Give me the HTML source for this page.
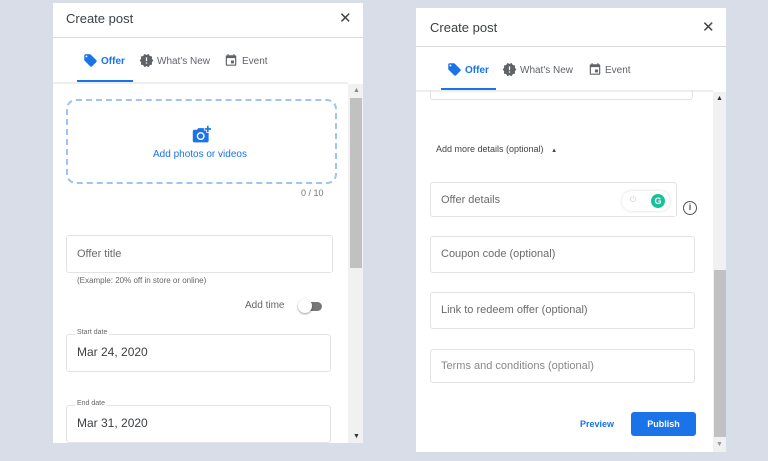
<!DOCTYPE html>
<html><head><style>
*{box-sizing:border-box;margin:0;padding:0}
body{width:768px;height:461px;background:#d9dde7;font-family:"Liberation Sans",sans-serif;position:relative;overflow:hidden}
.p{position:absolute;background:#fff}
.a{position:absolute}
.t{color:#3c4043;font-size:13px}
.tab{position:absolute;font-size:10px;color:#5f6368}
.box{position:absolute;border:1px solid #e3e3e3;border-radius:3px;background:#fff}
.ph{position:absolute;font-size:11px;color:#6b6b6b}
.x{position:absolute;font-size:15px;color:#444}
</style></head><body>
<!-- LEFT -->
<div class="p" style="left:53px;top:3px;width:310px;height:440px"></div>
<div class="a t" style="left:66px;top:11px">Create post</div>
<div class="x" style="left:339px;top:9px">✕</div>
<div class="a" style="left:53px;top:37px;width:310px;height:1px;background:#dadce0"></div>
<svg class="a" style="left:83px;top:53px" width="15" height="15" viewBox="0 0 24 24"><path fill="#1a73e8" d="M21.4 11.6l-9-9C12 2.2 11.5 2 11 2H4c-1.1 0-2 .9-2 2v7c0 .6.2 1.1.6 1.4l9 9c.4.4.9.6 1.4.6s1-.2 1.4-.6l7-7c.4-.4.6-.9.6-1.4s-.2-1-.6-1.4zM5.5 7C4.7 7 4 6.3 4 5.5S4.7 4 5.5 4 7 4.7 7 5.5 6.3 7 5.5 7z"/></svg>
<div class="tab" style="left:101px;top:56px;color:#1a73e8;font-weight:bold">Offer</div>
<svg class="a" style="left:139px;top:53px" width="15" height="15" viewBox="0 0 24 24"><path fill="#5f6368" d="M23 12l-2.4-2.8.3-3.7-3.6-.8-1.9-3.2L12 3 8.6 1.5 6.7 4.7l-3.6.8.3 3.7L1 12l2.4 2.8-.3 3.7 3.6.8 1.9 3.2L12 21l3.4 1.5 1.9-3.2 3.6-.8-.3-3.7zM13 17h-2v-2h2zm0-4h-2V7h2z"/></svg>
<div class="tab" style="left:157px;top:56px">What's New</div>
<svg class="a" style="left:224px;top:53px" width="14" height="15" viewBox="0 0 24 24"><path fill="#5f6368" d="M17 12h-5v5h5zM16 1v2H8V1H6v2H5c-1.1 0-2 .9-2 2v14c0 1.1.9 2 2 2h14c1.1 0 2-.9 2-2V5c0-1.1-.9-2-2-2h-1V1zm3 18H5V8h14z"/></svg>
<div class="tab" style="left:242px;top:56px">Event</div>
<div class="a" style="left:77px;top:80px;width:56px;height:2px;background:#1a73e8"></div>
<div class="a" style="left:53px;top:82px;width:295px;height:2px;background:#eee"></div>
<div class="a" style="left:66px;top:99px;width:271px;height:85px;border:2px dashed #9ec3f5;border-radius:10px"></div>
<svg class="a" style="left:192px;top:125px" width="19" height="19" viewBox="0 0 24 24"><path fill="#1a73e8" d="M3 4V1h2v3h3v2H5v3H3V6H0V4zm3 6V7h3V4h7l1.8 2H21c1.1 0 2 .9 2 2v12c0 1.1-.9 2-2 2H5c-1.1 0-2-.9-2-2V10zm7 9c2.8 0 5-2.2 5-5s-2.2-5-5-5-5 2.2-5 5 2.2 5 5 5zm-3.2-5c0 1.8 1.4 3.2 3.2 3.2s3.2-1.4 3.2-3.2-1.4-3.2-3.2-3.2-3.2 1.4-3.2 3.2z" transform="scale(-1,1) translate(-24,0)"/></svg>
<div class="a" style="left:153px;top:149px;font-size:10px;color:#1a73e8">Add photos or videos</div>
<div class="a" style="left:301px;top:188px;font-size:9px;color:#777">0 / 10</div>
<div class="box" style="left:66px;top:235px;width:267px;height:38px"></div>
<div class="ph" style="left:77px;top:248px">Offer title</div>
<div class="a" style="left:77px;top:276px;font-size:8px;color:#666">(Example: 20% off in store or online)</div>
<div class="a" style="left:245px;top:300px;font-size:10px;color:#666">Add time</div>
<div class="a" style="left:302px;top:302px;width:20px;height:9px;border-radius:5px;background:#777"></div>
<div class="a" style="left:298px;top:299px;width:14px;height:14px;border-radius:50%;background:#fff;box-shadow:0 1px 2px rgba(0,0,0,.4)"></div>
<div class="box" style="left:66px;top:334px;width:265px;height:38px"></div>
<div class="a" style="left:75px;top:329px;font-size:7px;color:#666;background:#fff;padding:0 2px">Start date</div>
<div class="a t" style="left:77px;top:345px;font-size:12px">Mar 24, 2020</div>
<div class="box" style="left:66px;top:405px;width:265px;height:38px"></div>
<div class="a" style="left:75px;top:400px;font-size:7px;color:#666;background:#fff;padding:0 2px">End date</div>
<div class="a t" style="left:77px;top:416px;font-size:12px">Mar 31, 2020</div>
<div class="a" style="left:348px;top:84px;width:15px;height:359px;background:#f1f1f1"></div>
<div class="a" style="left:350px;top:98px;width:12px;height:170px;background:#c1c1c1"></div>
<div class="a" style="left:353px;top:87px;font-size:7px;color:#888">▲</div>
<div class="a" style="left:353px;top:433px;font-size:7px;color:#333">▼</div>
<!-- RIGHT -->
<div class="p" style="left:416px;top:8px;width:310px;height:444px"></div>
<div class="a t" style="left:430px;top:20px">Create post</div>
<div class="x" style="left:702px;top:18px">✕</div>
<div class="a" style="left:416px;top:46px;width:310px;height:1px;background:#dadce0"></div>
<svg class="a" style="left:447px;top:62px" width="15" height="15" viewBox="0 0 24 24"><path fill="#1a73e8" d="M21.4 11.6l-9-9C12 2.2 11.5 2 11 2H4c-1.1 0-2 .9-2 2v7c0 .6.2 1.1.6 1.4l9 9c.4.4.9.6 1.4.6s1-.2 1.4-.6l7-7c.4-.4.6-.9.6-1.4s-.2-1-.6-1.4zM5.5 7C4.7 7 4 6.3 4 5.5S4.7 4 5.5 4 7 4.7 7 5.5 6.3 7 5.5 7z"/></svg>
<div class="tab" style="left:465px;top:65px;color:#1a73e8;font-weight:bold">Offer</div>
<svg class="a" style="left:502px;top:62px" width="15" height="15" viewBox="0 0 24 24"><path fill="#5f6368" d="M23 12l-2.4-2.8.3-3.7-3.6-.8-1.9-3.2L12 3 8.6 1.5 6.7 4.7l-3.6.8.3 3.7L1 12l2.4 2.8-.3 3.7 3.6.8 1.9 3.2L12 21l3.4 1.5 1.9-3.2 3.6-.8-.3-3.7zM13 17h-2v-2h2zm0-4h-2V7h2z"/></svg>
<div class="tab" style="left:520px;top:65px">What's New</div>
<svg class="a" style="left:588px;top:62px" width="14" height="15" viewBox="0 0 24 24"><path fill="#5f6368" d="M17 12h-5v5h5zM16 1v2H8V1H6v2H5c-1.1 0-2 .9-2 2v14c0 1.1.9 2 2 2h14c1.1 0 2-.9 2-2V5c0-1.1-.9-2-2-2h-1V1zm3 18H5V8h14z"/></svg>
<div class="tab" style="left:605px;top:65px">Event</div>
<div class="a" style="left:441px;top:88px;width:55px;height:2px;background:#1a73e8"></div>
<div class="a" style="left:416px;top:90px;width:297px;height:2px;background:#eee"></div>
<div class="a" style="left:430px;top:90px;width:263px;height:10px;border:1px solid #e3e3e3;border-top:none;border-radius:0 0 3px 3px"></div>
<div class="a" style="left:436px;top:144px;font-size:9px;color:#444">Add more details (optional) &nbsp; <span style="font-size:6px">▲</span></div>
<div class="box" style="left:430px;top:182px;width:247px;height:35px"></div>
<div class="ph" style="left:441px;top:194px">Offer details</div>
<div class="a" style="left:622px;top:191px;width:48px;height:20px;border-radius:10px;background:#fff;box-shadow:0 0 3px rgba(0,0,0,.15)"></div>
<div class="a" style="left:630px;top:195px;font-size:8px;color:#ccc">⏻</div>
<div class="a" style="left:651px;top:194px;width:14px;height:14px;border-radius:50%;background:#15c39a;color:#fff;font-size:9px;font-weight:bold;text-align:center;line-height:14px">G</div>
<div class="a" style="left:683px;top:201px;width:14px;height:14px;border:1.5px solid #555;border-radius:50%;font-size:9px;color:#555;text-align:center;line-height:11px;font-weight:bold">i</div>
<div class="box" style="left:430px;top:236px;width:265px;height:37px"></div>
<div class="ph" style="left:441px;top:248px">Coupon code (optional)</div>
<div class="box" style="left:430px;top:292px;width:265px;height:37px"></div>
<div class="ph" style="left:441px;top:304px">Link to redeem offer (optional)</div>
<div class="box" style="left:430px;top:349px;width:265px;height:34px"></div>
<div class="ph" style="left:441px;top:360px;color:#888">Terms and conditions (optional)</div>
<div class="a" style="left:580px;top:419px;font-size:9px;color:#1a73e8;font-weight:bold">Preview</div>
<div class="a" style="left:631px;top:412px;width:65px;height:24px;background:#1a73e8;border-radius:3px;color:#fff;font-size:9px;font-weight:bold;text-align:center;line-height:24px">Publish</div>
<div class="a" style="left:713px;top:92px;width:13px;height:360px;background:#f1f1f1"></div>
<div class="a" style="left:714px;top:270px;width:12px;height:167px;background:#c1c1c1"></div>
<div class="a" style="left:716px;top:95px;font-size:7px;color:#333">▲</div>
<div class="a" style="left:716px;top:441px;font-size:7px;color:#999">▼</div>
</body></html>
